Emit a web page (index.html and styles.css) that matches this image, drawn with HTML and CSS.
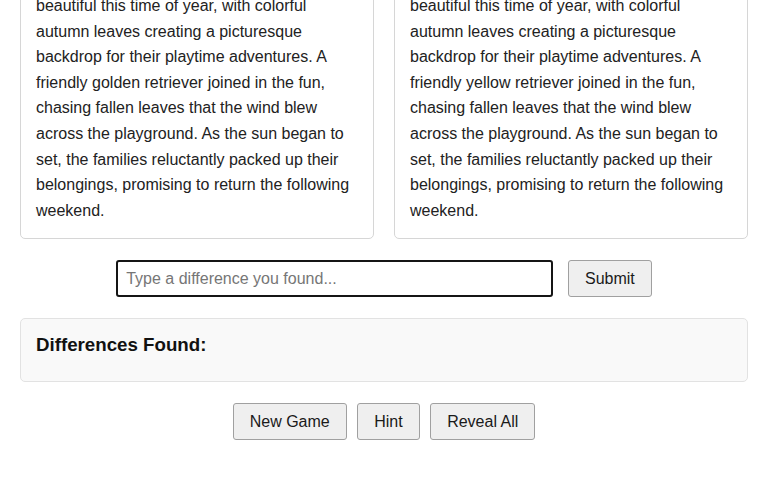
FILE: index.html
```html
<!DOCTYPE html>
<html lang="en">
<head>
<meta charset="utf-8">
<title>Spot the Difference</title>
<link rel="stylesheet" href="styles.css">
</head>
<body>
<main class="page">
  <section class="texts">
    <div class="card">
      <p class="story">beautiful this time of year, with colorful autumn leaves creating a picturesque backdrop for their playtime adventures. A friendly golden retriever joined in the fun, chasing fallen leaves that the wind blew across the playground. As the sun began to set, the families reluctantly packed up their belongings, promising to return the following weekend.</p>
    </div>
    <div class="card">
      <p class="story">beautiful this time of year, with colorful autumn leaves creating a picturesque backdrop for their playtime adventures. A friendly yellow retriever joined in the fun, chasing fallen leaves that the wind blew across the playground. As the sun began to set, the families reluctantly packed up their belongings, promising to return the following weekend.</p>
    </div>
  </section>

  <form class="guess">
    <input class="guess-input" type="text" placeholder="Type a difference you found...">
    <button class="btn" type="button">Submit</button>
  </form>

  <section class="found">
    <h3 class="found-title">Differences Found:</h3>
    <ul class="found-list"></ul>
  </section>

  <div class="controls">
    <button class="btn" type="button">New Game</button>
    <button class="btn" type="button">Hint</button>
    <button class="btn" type="button">Reveal All</button>
  </div>
</main>
</body>
</html>
```

FILE: styles.css
```css
* {
  box-sizing: border-box;
}

html, body {
  margin: 0;
  padding: 0;
  background: #ffffff;
}

body {
  font-family: "Liberation Sans", Arial, sans-serif;
  font-size: 16px;
  color: #222222;
}

.page {
  margin: -23px 20px 0;
}

.texts {
  display: grid;
  grid-template-columns: 1fr 1fr;
  gap: 20px;
}

.card {
  background: #ffffff;
  border: 1px solid #d6d6d6;
  border-radius: 5px;
  padding: 15px;
}

.story {
  margin: 0;
  line-height: 1.6;
}

.guess {
  display: flex;
  justify-content: center;
  align-items: stretch;
  gap: 15px;
  margin: 21px 0 0;
}

.guess-input {
  width: 60%;
  height: 37px;
  padding: 0 8px;
  border: 2px solid #151515;
  border-radius: 3px;
  font-family: "Liberation Sans", Arial, sans-serif;
  font-size: 16px;
  color: #222222;
  background: #ffffff;
  outline: none;
}

.guess-input::placeholder {
  color: #767676;
}

.btn {
  height: 37px;
  padding: 0 16px;
  font-family: "Liberation Sans", Arial, sans-serif;
  font-size: 16px;
  color: #1a1a1a;
  background: #efefef;
  border: 1px solid #a0a0a0;
  border-radius: 3px;
}

.found {
  margin-top: 21px;
  background: #f9f9f9;
  border: 1px solid #e2e2e2;
  border-radius: 5px;
  padding: 15px;
}

.found-title {
  margin: 0 0 10px;
  font-size: 18.72px;
  font-weight: bold;
  color: #111111;
}

.found-list {
  margin: 0;
  padding: 0;
  list-style: none;
}

.controls {
  display: flex;
  justify-content: center;
  gap: 10.5px;
  margin-top: 21px;
}
```
